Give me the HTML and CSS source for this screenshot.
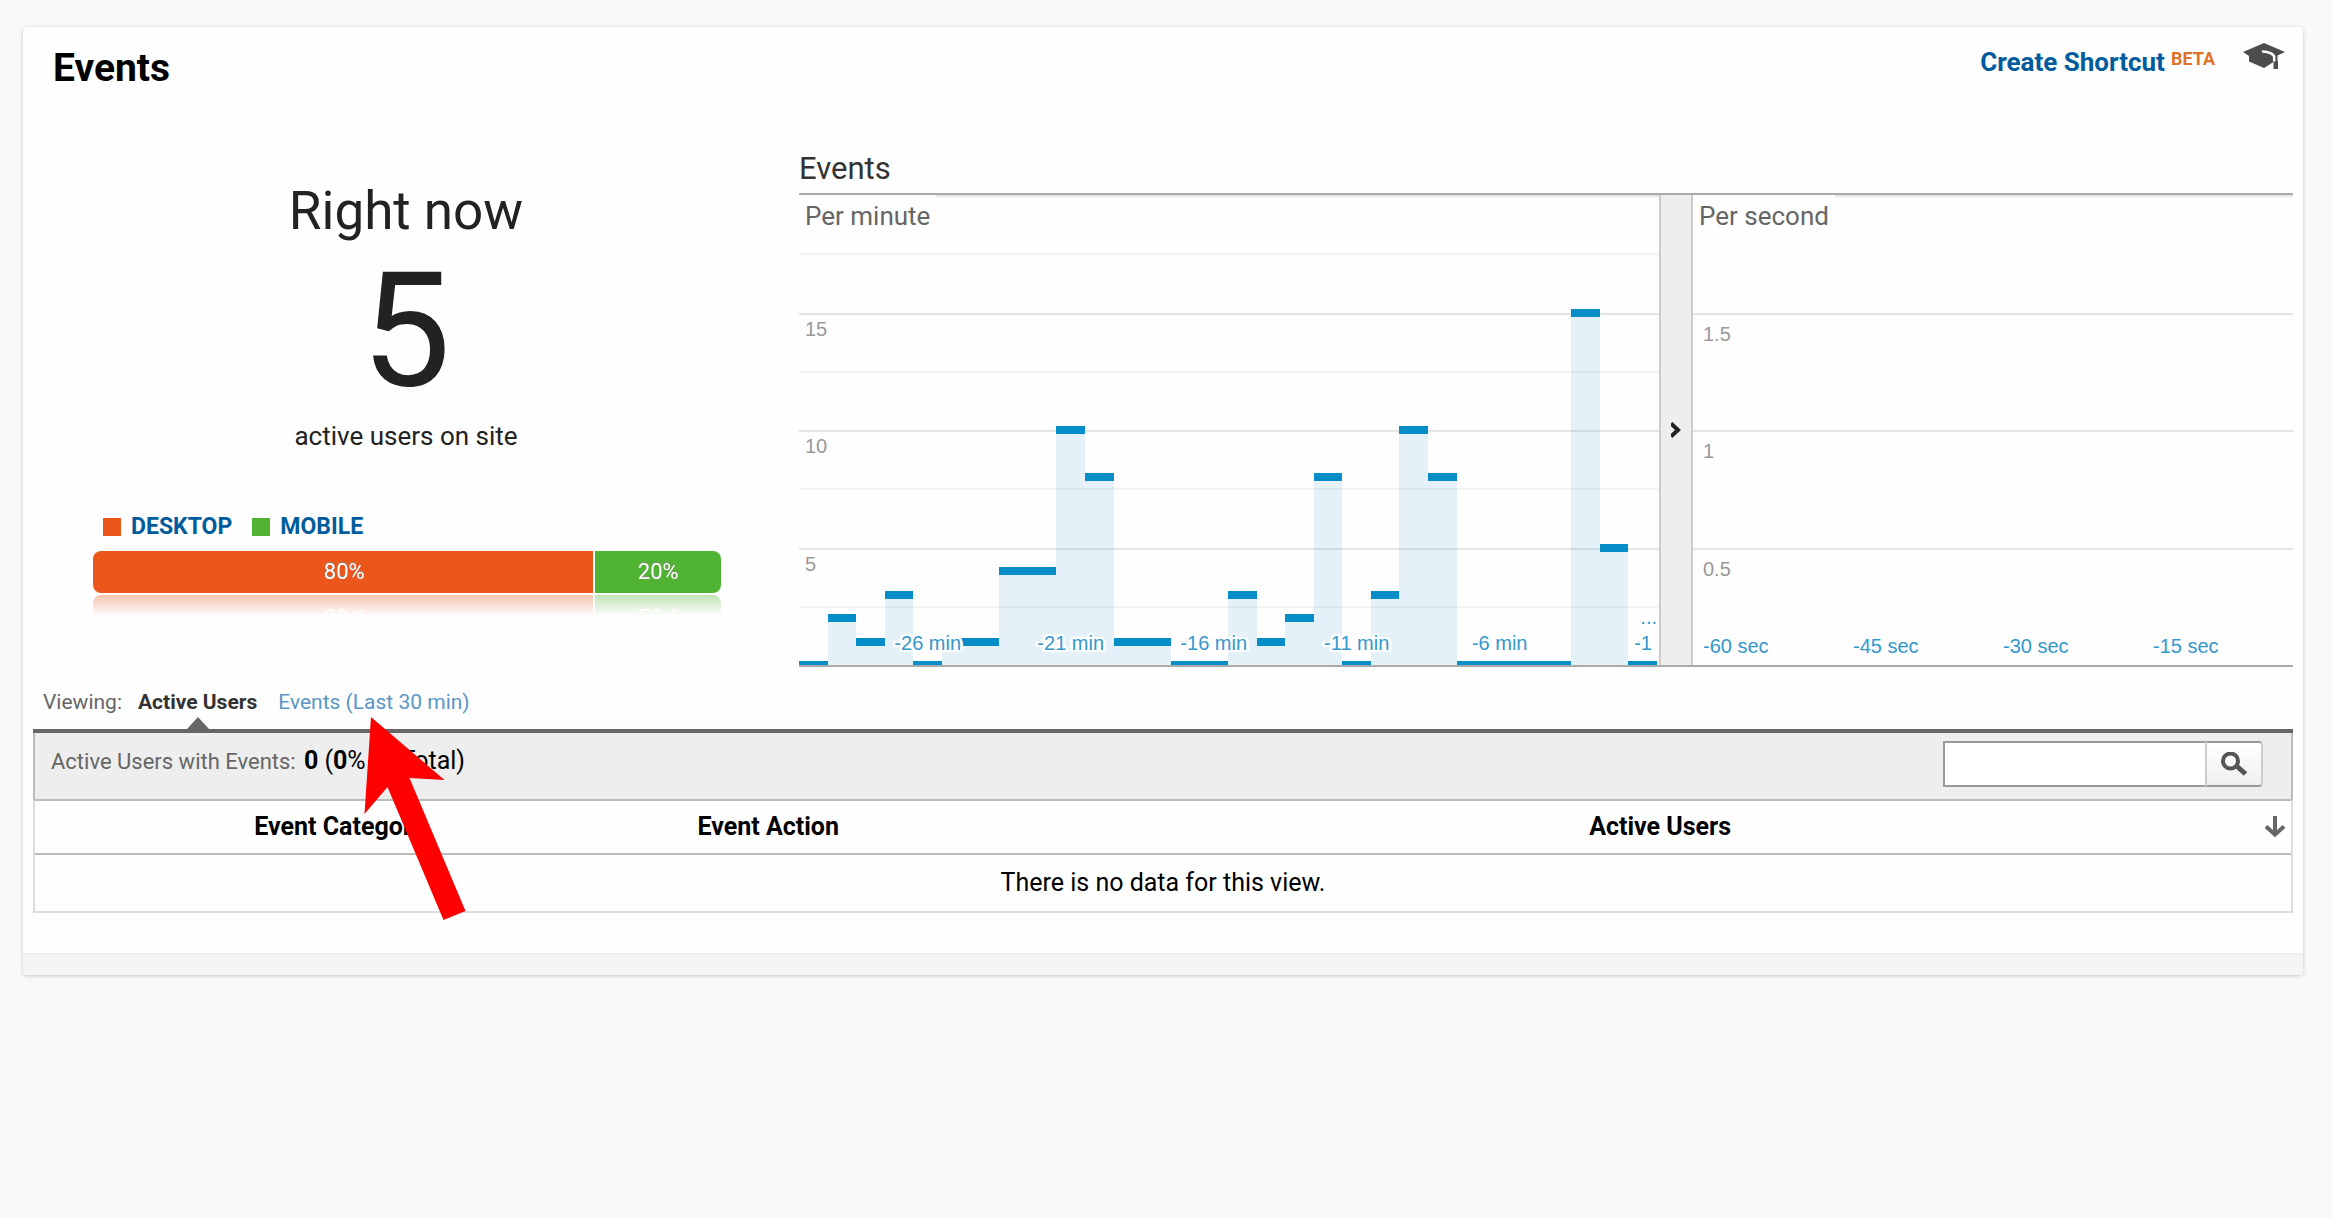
FILE: index.html
```html
<!DOCTYPE html>
<html lang="en">
<head>
<meta charset="utf-8">
<meta name="viewport" content="width=device-width, initial-scale=1">
<title>Events</title>
<link rel="stylesheet" href="styles.css">
</head>
<body>
<main class="card">
  <header class="card-header">
    <h1 class="title">Events</h1>
    <div class="actions">
      <a class="shortcut" href="#shortcut">Create Shortcut</a>
      <span class="beta">BETA</span>
      <button class="icon-button" type="button" aria-label="Learn about this report">
        <svg class="cap-icon" viewBox="0 0 42 26" aria-hidden="true">
          <path fill="#4d4d4d" d="M21 0 42 9 34.500 12.500V18H35V26H30.500V19L21 25 6 18.500V13L0 9Z"/>
          <path fill="none" stroke="#fefefe" stroke-width="2.500" stroke-linecap="round" d="M20 8.500C25 8.500 31 11 31.200 14V17.500"/>
        </svg>
      </button>
    </div>
  </header>

  <section class="overview">
    <div class="now">
      <p class="now-title">Right now</p>
      <p class="now-count">5</p>
      <p class="now-caption">active users on site</p>
      <ul class="legend">
        <li><span class="swatch desktop"></span><a href="#desktop">DESKTOP</a></li>
        <li><span class="swatch mobile"></span><a href="#mobile">MOBILE</a></li>
      </ul>
      <div class="share">
        <div class="share-part desktop" style="width:80%">80%</div>
        <div class="share-part mobile" style="width:20%">20%</div>
      </div>
    </div>

    <div class="charts">
      <h2 class="charts-title">Events</h2>
      <div class="charts-body">
        <div class="plot minutes">
          <h3 class="plot-title">Per minute</h3>
          <div class="scale"><span></span><span>15</span><span>10</span><span>5</span></div>
          <div class="bars">
            <i style="height:0%"></i><i style="height:10%"></i><i style="height:5%"></i><i style="height:15%"></i><i style="height:0%"></i>
            <i style="height:5%"></i><i style="height:5%"></i><i style="height:20%"></i><i style="height:20%"></i><i style="height:50%"></i>
            <i style="height:40%"></i><i style="height:5%"></i><i style="height:5%"></i><i style="height:0%"></i><i style="height:0%"></i>
            <i style="height:15%"></i><i style="height:5%"></i><i style="height:10%"></i><i style="height:40%"></i><i style="height:0%"></i>
            <i style="height:15%"></i><i style="height:50%"></i><i style="height:40%"></i><i style="height:0%"></i><i style="height:0%"></i>
            <i style="height:0%"></i><i style="height:0%"></i><i style="height:75%"></i><i style="height:25%"></i><i style="height:0%"></i>
          </div>
          <div class="ticks">
            <span>-26 min</span><span>-21 min</span><span>-16 min</span><span>-11 min</span><span>-6 min</span><span class="cut">...<br>-1</span>
          </div>
        </div>
        <button class="divider" type="button" aria-label="Collapse the per second chart">
          <svg class="chevron" viewBox="0 0 10 16" aria-hidden="true"><path fill="none" stroke="#222" stroke-width="4" d="M0 1.500 7 8 0 14.500"/></svg>
        </button>
        <div class="plot seconds">
          <h3 class="plot-title">Per second</h3>
          <div class="scale"><span></span><span>1.5</span><span>1</span><span>0.5</span></div>
          <div class="ticks"><span>-60 sec</span><span>-45 sec</span><span>-30 sec</span><span>-15 sec</span></div>
        </div>
      </div>
    </div>
  </section>

  <nav class="views">
    <span class="views-label">Viewing:</span>
    <a class="view current" href="#users">Active Users</a>
    <a class="view" href="#events">Events (Last 30 min)</a>
    <svg class="pointer" viewBox="0 0 102 203" aria-hidden="true"><path fill="#f00" d="M7 0 80.500 63 45.500 61 101.500 194 79.500 203 23.500 70 0.500 97Z"/></svg>
  </nav>

  <section class="report">
    <div class="toolbar">
      <p class="summary"><span class="summary-label">Active Users with Events:</span> <b>0</b> (<b>0</b>% of Total)</p>
      <form class="search" role="search">
        <input class="search-box" type="text" aria-label="Search events">
        <button class="search-button" type="submit" aria-label="Search">
          <svg class="search-icon" viewBox="0 0 26 24" aria-hidden="true"><circle cx="9.500" cy="9" r="7.500" fill="none" stroke="#555" stroke-width="4"/><path fill="none" stroke="#555" stroke-width="5" d="M15 13.500 24.500 22"/></svg>
        </button>
      </form>
    </div>
    <table class="events">
      <thead>
        <tr>
          <th class="col-category" scope="col">Event Category</th>
          <th class="col-action" scope="col">Event Action</th>
          <th class="col-users" scope="col">
            <div class="sortable">
              <span>Active Users</span>
              <svg class="sort-icon" viewBox="0 0 20 22" aria-hidden="true"><path fill="none" stroke="#666" stroke-width="4" d="M10 0V19M1 10.500 10 18.500 19 10.500"/></svg>
            </div>
          </th>
        </tr>
      </thead>
      <tbody>
        <tr><td colspan="3">There is no data for this view.</td></tr>
      </tbody>
    </table>
  </section>
  <footer class="card-footer"></footer>
</main>
</body>
</html>
```
FILE: styles.css
```css
* {
  box-sizing: border-box;
}

body {
  margin: 0;
  padding: 27px 29px 27px 23px;
  background: #f8f9fb;
  color: #000;
  font-family: Roboto, "Liberation Sans", sans-serif;
  font-size: 25px;
  line-height: 32px;
}

h1, h2, h3, p, ul {
  margin: 0;
  padding: 0;
  font-weight: 400;
}

a {
  color: #005c9c;
  text-decoration: none;
}

button {
  margin: 0;
  padding: 0;
  border: 0;
  background: none;
  cursor: pointer;
}

svg {
  display: block;
}

.card {
  background: #fefefe;
  border-radius: 4px;
  box-shadow: 0 1px 4px rgba(0, 0, 0, 0.2);
}

.card-header {
  display: flex;
  justify-content: space-between;
  padding: 21px 18px 0 30px;
}

.title {
  font-size: 39px;
  font-weight: 700;
  line-height: 40px;
}

.actions {
  display: flex;
  align-items: flex-start;
}

.shortcut {
  font-size: 26px;
  font-weight: 700;
  line-height: 28px;
}

.beta {
  margin: 0 28px 0 6px;
  color: #de7229;
  font-size: 18px;
  font-weight: 700;
  line-height: 22px;
}

.cap-icon {
  width: 42px;
  height: 26px;
}

.icon-button {
  margin-top: -5px;
}

.overview {
  display: grid;
  grid-template-columns: 766fr 1494fr;
  padding: 0 10px;
}

.now {
  padding: 93px 78px 0 60px;
  color: #222;
  text-align: center;
}

.now p {
  padding-right: 2px;
}

.now-title {
  font-size: 53px;
  line-height: 60px;
}

.now-count {
  margin-top: 10px;
  font-size: 160px;
  line-height: 160px;
}

.now-caption {
  margin-top: 9px;
  font-size: 26px;
}

.legend {
  display: flex;
  gap: 20px;
  margin-top: 59px;
  padding-left: 10px;
  list-style: none;
  font-size: 23px;
  font-weight: 700;
}

.legend li {
  display: flex;
  align-items: center;
  gap: 10px;
}

.swatch {
  width: 18px;
  height: 18px;
}

.desktop {
  background: #ed561b;
}

.mobile {
  background: #50b432;
}

.share {
  display: flex;
  margin-top: 8px;
  border-radius: 8px;
  overflow: hidden;
  -webkit-box-reflect: below 2px linear-gradient(transparent 50%, rgba(0, 0, 0, 0.35));
}

.share-part {
  color: #fff;
  font-size: 22px;
  line-height: 42px;
  text-shadow: 0 -1px 1px #888;
}

.share-part + .share-part {
  box-shadow: -2px 0 #fff;
}

.charts {
  padding-top: 57px;
}

.charts-title {
  border-bottom: 2px solid #aaa;
  color: #333;
  font-size: 31px;
  line-height: 48px;
}

.charts-body {
  display: grid;
  grid-template-columns: 860fr 34px 600fr;
  height: 472px;
  border-bottom: 2px solid #aaa;
}

.plot {
  position: relative;
  display: grid;
  grid-template: 100% / 100%;
  color: #999;
  font-family: "Liberation Sans", Arial, sans-serif;
  font-size: 20px;
  line-height: 24px;
}

.plot > * {
  grid-area: 1 / 1;
}

.plot-title {
  z-index: 1;
  align-self: start;
  justify-self: start;
  padding: 5px 6px 0;
  background: #fefefe;
  color: #666;
  font-family: Roboto, "Liberation Sans", sans-serif;
  font-size: 26px;
  line-height: 32px;
}

.scale {
  display: grid;
  grid-template-rows: repeat(4, 1fr);
}

.scale span {
  padding: 2px 6px 0;
  border-top: 2px solid #e5e5e5;
}

.minutes .scale span {
  background: linear-gradient(#f3f3f3, #f3f3f3) 0 56px / 100% 2px no-repeat;
}

.seconds .scale span {
  padding: 7px 10px 0;
}

.bars {
  display: flex;
  align-items: flex-end;
  padding-right: 2px;
  overflow: hidden;
}

.bars i {
  position: relative;
  flex: 1;
  background: rgba(5, 130, 200, 0.1);
}

.bars i::before {
  content: "";
  position: absolute;
  top: -4px;
  right: 0;
  left: 0;
  height: 8px;
  background: #058dc7;
}

.ticks {
  z-index: 1;
  display: flex;
  align-items: flex-end;
  align-self: end;
  color: #3399cc;
}

.ticks span {
  min-width: 0;
  white-space: nowrap;
}

.minutes .ticks {
  padding: 0 2px 9px 0;
  line-height: 26px;
  text-align: center;
  text-shadow: 2px 0 #fff, -2px 0 #fff, 0 2px #fff, 0 -2px #fff, 2px 2px #fff, -2px 2px #fff, 2px -2px #fff, -2px -2px #fff, 3px 1px #fff, -3px 1px #fff;
}

.minutes .ticks::before {
  content: "";
  flex: 2;
}

.minutes .ticks span {
  flex: 5;
}

.minutes .ticks .cut {
  flex: 3;
  text-align: right;
}

/* Keeps the last label under the last bar without changing the column widths. */
.minutes .ticks .cut::after {
  content: "";
  display: inline-block;
  width: 5px;
}

.cut::first-line {
  line-height: 26px;
}

.seconds .ticks {
  padding-bottom: 7px;
}

.seconds .ticks span {
  flex: 1;
  padding-left: 10px;
}

.divider {
  display: grid;
  place-items: center;
  border: solid #ccc;
  border-width: 0 2px;
  background: #eee;
}

.chevron {
  width: 10px;
  height: 16px;
}

.views {
  position: relative;
  display: flex;
  padding: 19px 10px 0 20px;
  font-size: 21px;
}

.views-label {
  color: #666;
}

.view {
  position: relative;
  margin-left: 21px;
  padding-bottom: 11px;
  color: #5a97c6;
}

.view.current {
  margin-left: 16px;
  color: #333;
  font-weight: 700;
}

.view.current::after {
  content: "";
  position: absolute;
  bottom: 0;
  left: calc(50% - 11px);
  border: solid transparent;
  border-width: 0 11px 12px;
  border-bottom-color: #666;
}

.pointer {
  position: absolute;
  z-index: 2;
  top: 50px;
  left: 341px;
  width: 102px;
  height: 203px;
}

.report {
  margin: 0 10px 40px;
  border-top: 4px solid #666;
}

.toolbar {
  display: flex;
  justify-content: space-between;
  height: 66px;
  padding: 8px 28px 0 16px;
  border: solid #bbb;
  border-width: 0 2px;
  background: #eee;
}

.summary {
  padding-top: 4px;
  font-size: 25px;
}

.summary-label {
  margin-right: 2px;
  color: #666;
  font-size: 22px;
}

.search {
  display: flex;
  width: 320px;
  height: 46px;
}

.search-box {
  flex: 1;
  min-width: 0;
  border: 2px solid #999;
  border-right: 0;
  background: #fff;
  font: inherit;
}

.search-button {
  display: grid;
  place-items: center;
  width: 58px;
  border: 2px solid #999;
  border-right-color: #ccc;
  border-left-color: #ccc;
  border-radius: 0 4px 4px 0;
  background: linear-gradient(#fff, #f0f0f0);
}

.search-icon {
  width: 26px;
  height: 24px;
}

.events {
  width: 100%;
  border: 2px solid #ddd;
  border-top-color: #bbb;
  border-spacing: 0;
  table-layout: fixed;
  text-align: center;
}

.events th {
  padding: 10px 0;
  border-bottom: 2px solid #bbb;
  font-weight: 700;
}

.events td {
  padding: 12px 0;
}

.col-category {
  width: 27%;
}

.col-action {
  width: 11%;
}

.sortable {
  display: flex;
  align-items: center;
  padding: 0 6px 0 163px;
}

.sortable span {
  flex: 1;
}

.sort-icon {
  width: 20px;
  height: 22px;
}

.card-footer {
  height: 22px;
  border-top: 2px solid #eee;
  border-radius: 0 0 4px 4px;
  background: #f5f5f5;
}
```
